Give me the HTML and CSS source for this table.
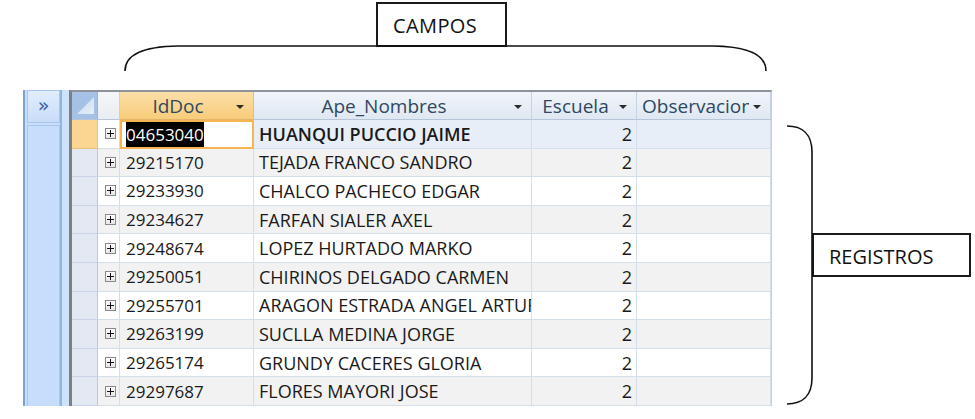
FILE: index.html
```html
<!DOCTYPE html>
<html lang="es">
<head>
<meta charset="utf-8">
<title>Tabla Docentes</title>
<link rel="stylesheet" href="styles.css">
</head>
<body>
<div class="page">
  <div class="top">
    <div class="callout campos">CAMPOS</div>
  </div>
  <div class="main">
    <div class="nav">
      <div class="nav-col">
        <div class="nav-btn">»</div>
        <div class="nav-body"></div>
      </div>
      <div class="nav-strip"></div>
    </div>
    <div class="sheet">
      <div class="grid">
        <div class="hcell corner"></div>
        <div class="hcell hexp"></div>
        <div class="hcell hsel"><span class="hlabel">IdDoc</span><span class="arrow"></span></div>
        <div class="hcell"><span class="hlabel">Ape_Nombres</span><span class="arrow"></span></div>
        <div class="hcell"><span class="hlabel">Escuela</span><span class="arrow"></span></div>
        <div class="hcell"><span class="hlabel left">Observacion</span><span class="arrow"></span></div>

        <div class="rsel cur"></div><div class="cell cur exp"><span class="plus"></span></div><div class="cell cur id focus"><span class="selected">04653040</span></div><div class="cell cur name bold">HUANQUI PUCCIO JAIME</div><div class="cell cur num">2</div><div class="cell cur"></div>

        <div class="rsel"></div><div class="cell alt exp"><span class="plus"></span></div><div class="cell alt id">29215170</div><div class="cell alt name">TEJADA FRANCO SANDRO</div><div class="cell alt num">2</div><div class="cell alt"></div>

        <div class="rsel"></div><div class="cell exp"><span class="plus"></span></div><div class="cell id">29233930</div><div class="cell name">CHALCO PACHECO EDGAR</div><div class="cell num">2</div><div class="cell"></div>

        <div class="rsel"></div><div class="cell alt exp"><span class="plus"></span></div><div class="cell alt id">29234627</div><div class="cell alt name">FARFAN SIALER AXEL</div><div class="cell alt num">2</div><div class="cell alt"></div>

        <div class="rsel"></div><div class="cell exp"><span class="plus"></span></div><div class="cell id">29248674</div><div class="cell name">LOPEZ HURTADO MARKO</div><div class="cell num">2</div><div class="cell"></div>

        <div class="rsel"></div><div class="cell alt exp"><span class="plus"></span></div><div class="cell alt id">29250051</div><div class="cell alt name">CHIRINOS DELGADO CARMEN</div><div class="cell alt num">2</div><div class="cell alt"></div>

        <div class="rsel"></div><div class="cell exp"><span class="plus"></span></div><div class="cell id">29255701</div><div class="cell name">ARAGON ESTRADA ANGEL ARTURO</div><div class="cell num">2</div><div class="cell"></div>

        <div class="rsel"></div><div class="cell alt exp"><span class="plus"></span></div><div class="cell alt id">29263199</div><div class="cell alt name">SUCLLA MEDINA JORGE</div><div class="cell alt num">2</div><div class="cell alt"></div>

        <div class="rsel"></div><div class="cell exp"><span class="plus"></span></div><div class="cell id">29265174</div><div class="cell name">GRUNDY CACERES GLORIA</div><div class="cell num">2</div><div class="cell"></div>

        <div class="rsel"></div><div class="cell alt exp"><span class="plus"></span></div><div class="cell alt id">29297687</div><div class="cell alt name">FLORES MAYORI JOSE</div><div class="cell alt num">2</div><div class="cell alt"></div>
      </div>
    </div>
    <div class="side">
      <div class="callout registros">REGISTROS</div>
    </div>
  </div>
  <svg class="braces" width="975" height="419" viewBox="0 0 975 419" aria-hidden="true">
    <path d="M125 71 C125 56 140 46.5 178 46 L713 46 C751 46.5 766 56 766 71" />
    <path d="M787 126 C802 126 812 134 812 152 L812 378 C812 396 802 404 787 404" />
  </svg>
</div>
</body>
</html>
```

FILE: styles.css
```css
* { box-sizing: border-box; }

html, body {
  margin: 0;
  padding: 0;
  background: #ffffff;
}

.page {
  position: relative;
  width: 975px;
  height: 419px;
  overflow: hidden;
  font-family: "Open Sans", "Liberation Sans", sans-serif;
  color: #1e1e1e;
}

/* ---------- annotations ---------- */
.top {
  height: 88px;
}

.callout {
  border: 2px solid #1a1a1a;
  background: #ffffff;
  font-size: 20px;
  line-height: 24px;
  color: #111111;
  padding-left: 15px;
}

.campos {
  margin-left: 376px;
  margin-top: 2px;
  width: 131px;
  height: 45px;
  padding-top: 10px;
  letter-spacing: 0.4px;
}

.side {
  flex: 1;
  padding-left: 40px;
  padding-top: 143px;
}

.registros {
  width: 159px;
  height: 44px;
  padding-top: 10px;
}

.braces {
  position: absolute;
  left: 0;
  top: 0;
  pointer-events: none;
}

.braces path {
  fill: none;
  stroke: #111111;
  stroke-width: 1.6;
}

/* ---------- layout ---------- */
.main {
  display: flex;
  align-items: flex-start;
  padding-left: 23px;
}

/* ---------- navigation pane ---------- */
.nav {
  display: flex;
  width: 46px;
  height: 316px;
  background: #c8defb;
  border-left: 2px solid #7aa3dc;
}

.nav-col {
  display: flex;
  flex-direction: column;
  width: 37px;
  border-right: 2px solid #8fb4e6;
  padding-left: 2px;
}

.nav-btn {
  height: 33px;
  background: linear-gradient(#e1edfc, #c9ddf8);
  border: 1px solid #a9c6ec;
  color: #3f64a3;
  font-family: "DejaVu Sans", sans-serif;
  font-size: 19px;
  line-height: 29px;
  text-align: center;
}

.nav-body {
  flex: 1;
  margin-top: 2px;
  background: #c6ddfc;
  border: 1px solid #a9c6ec;
  border-bottom: none;
}

.nav-strip {
  flex: 1;
  background: #cfe2fb;
}

/* ---------- datasheet ---------- */
.sheet {
  border-left: 3px solid #7e7f81;
  border-top: 2px solid #8e939a;
  border-right: 1px solid #c4cedb;
}

.grid {
  display: grid;
  grid-template-columns: 26px 22px 134px 278px 105px 134px;
  grid-template-rows: 28px repeat(10, 28.6px);
}

.hcell {
  display: flex;
  align-items: center;
  background: linear-gradient(#f1f5fa, #dfe7f2);
  border-right: 1px solid #c6d2e2;
  border-bottom: 1px solid #b6c5d9;
  color: #2e4862;
  font-size: 19px;
  white-space: nowrap;
  overflow: hidden;
}

.hcell.corner {
  position: relative;
  background: #a6c1e6;
  border-right: 1px solid #97b3da;
}

.hcell.corner::after {
  content: "";
  position: absolute;
  left: 5px;
  top: 5px;
  width: 17px;
  height: 17px;
  background: linear-gradient(135deg, #c9d9ef, #e6eef8);
  clip-path: polygon(100% 0, 100% 100%, 0 100%);
}

.hcell.hexp {
  background: linear-gradient(#f6f7f9, #e9ecf1);
}

.hcell.hsel {
  background: linear-gradient(#fbdfa9, #f8cc79);
  border-right-color: #e4c07f;
  border-bottom-color: #e2b66a;
}

.hlabel {
  flex: 1;
  min-width: 0;
  overflow: hidden;
  text-align: center;
  padding-left: 4px;
}

.hlabel.left {
  text-align: left;
  padding-left: 5px;
}

.arrow {
  flex: none;
  width: 0;
  height: 0;
  margin: 2px 9px 0 4px;
  border-left: 4px solid transparent;
  border-right: 4px solid transparent;
  border-top: 4px solid #2b2b2b;
}

.rsel {
  background: #e3e9f3;
  border-right: 1px solid #b9c9de;
  border-bottom: 1px solid #c9d5e6;
}

.rsel.cur {
  background: #fbd592;
  border-bottom-color: #e9c27a;
}

.cell {
  display: flex;
  align-items: center;
  background: #ffffff;
  border-right: 1px solid #d5deeb;
  border-bottom: 1px solid #d5deeb;
  font-size: 18px;
  color: #1a1a1a;
  white-space: nowrap;
  overflow: hidden;
}

.cell.alt {
  background: #f2f2f2;
}

.cell.cur {
  background: #e8eef8;
}

.cell.exp.cur {
  background: #ffffff;
}

.cell.exp {
  justify-content: center;
  padding-left: 3px;
}

.cell.id {
  font-size: 17px;
  padding-left: 6px;
}

.cell.name {
  padding-left: 5px;
}

.cell.bold {
  font-weight: 600;
}

.cell.num {
  justify-content: flex-end;
  padding-right: 4px;
}

.cell.focus {
  background: #ffffff;
  border: 2px solid #f6b453;
  padding-left: 4px;
}

.selected {
  background: #000000;
  color: #ffffff;
  line-height: 25px;
}

.plus {
  position: relative;
  width: 11px;
  height: 11px;
  border: 1px solid #8a8a8a;
  background: linear-gradient(#ffffff, #e6e6e6);
}

.plus::before,
.plus::after {
  content: "";
  position: absolute;
  background: #111111;
}

.plus::before {
  left: 1px;
  top: 4px;
  width: 7px;
  height: 1px;
}

.plus::after {
  left: 4px;
  top: 1px;
  width: 1px;
  height: 7px;
}
```
